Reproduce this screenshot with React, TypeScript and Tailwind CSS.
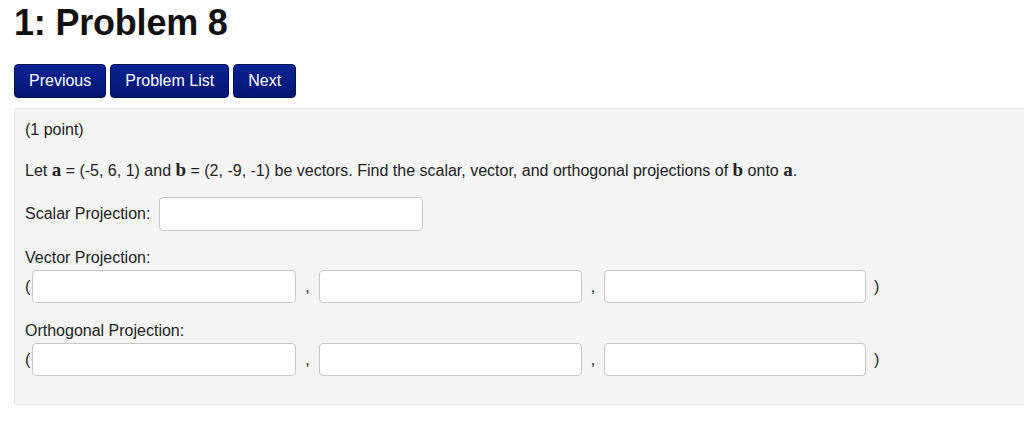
import React from "react";

const Btn = ({ children }: { children: React.ReactNode }) => (
  <button className="h-[34px] px-[14px] rounded-[4px] border border-[#001058] bg-gradient-to-b from-[#0b2394] to-[#021670] text-white text-[16px] leading-none">
    {children}
  </button>
);

const Field = ({ w }: { w: string }) => (
  <div className={`${w} h-[33px] rounded-[4px] border border-[#c8c8c8] bg-white`} />
);

const VecRow = () => (
  <div className="flex items-center h-[33px]">
    <span className="w-[7px]">(</span>
    <Field w="w-[264px]" />
    <span className="w-[23px] text-center">,</span>
    <Field w="w-[263px]" />
    <span className="w-[22px] text-center">,</span>
    <Field w="w-[262px]" />
    <span className="ml-[8px]">)</span>
  </div>
);

const B = ({ children }: { children: React.ReactNode }) => (
  <b className="font-['Liberation_Serif',serif] text-[19px] leading-none">{children}</b>
);

export default function App() {
  return (
    <div className="w-[1024px] h-[423px] overflow-hidden bg-white text-[#222] font-['Liberation_Sans',Arial,sans-serif]">
      <div className="pl-[14px]">
        <h1 className="text-[36px] font-bold leading-none pt-[5px] text-[#111] tracking-[-0.2px]">1: Problem 8</h1>
        <div className="flex gap-[4px] mt-[23px]">
          <Btn>Previous</Btn>
          <Btn>Problem List</Btn>
          <Btn>Next</Btn>
        </div>
        <div className="mt-[10px] w-[1030px] h-[297px] bg-[#f5f5f5] border border-[#e3e3e3] rounded-[3px] pl-[10px] pt-[11px] text-[16px]">
          <div className="leading-[20px]">(1 point)</div>
          <div className="leading-[20px] h-[20px] mt-[20px]">
            Let <B>a</B> = (-5, 6, 1) and <B>b</B> = (2, -9, -1) be vectors. Find the scalar, vector, and orthogonal projections of <B>b</B> onto <B>a</B>.
          </div>
          <div className="flex items-center mt-[17px] h-[34px]">
            <span className="w-[134px]">Scalar Projection:</span>
            <div className="w-[264px] h-[34px] rounded-[4px] border border-[#c8c8c8] bg-white" />
          </div>
          <div className="leading-[20px] mt-[17px]">Vector Projection:</div>
          <div className="mt-[2px]">
            <VecRow />
          </div>
          <div className="leading-[20px] mt-[18px]">Orthogonal Projection:</div>
          <div className="mt-[2px]">
            <VecRow />
          </div>
        </div>
      </div>
    </div>
  );
}
